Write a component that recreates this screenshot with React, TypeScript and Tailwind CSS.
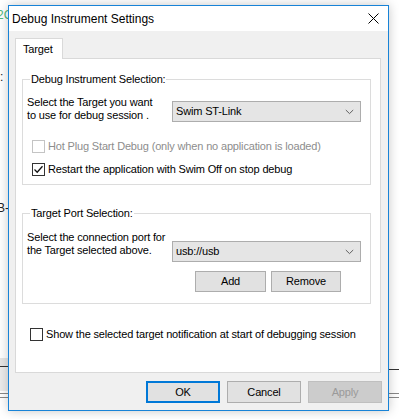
import React from "react";

const F = { fontFamily: '"Liberation Sans", Arial, sans-serif' };

function Check({ checked, disabled }: { checked?: boolean; disabled?: boolean }) {
  return (
    <div
      className={`w-[13px] h-[13px] border bg-white flex items-center justify-center shrink-0 ${
        disabled ? "border-[#c4c4c4]" : "border-[#333333]"
      }`}
    >
      {checked && (
        <svg width="11" height="11" viewBox="0 0 11 11">
          <path d="M1.5 5.5 L4.2 8.2 L9.5 2.2" fill="none" stroke="#111" strokeWidth="1.3" />
        </svg>
      )}
    </div>
  );
}

function Combo({ text }: { text: string }) {
  return (
    <div className="w-[189px] h-[21px] bg-[#e5e5e5] border border-[#adadad] flex items-center pl-[3px] pr-[6px] text-[11px] text-black">
      <span className="flex-1">{text}</span>
      <svg width="9" height="6" viewBox="0 0 9 6">
        <path d="M0.8 1 L4.5 4.6 L8.2 1" fill="none" stroke="#606060" strokeWidth="1" />
      </svg>
    </div>
  );
}

function Btn({ children, className = "" }: { children: React.ReactNode; className?: string }) {
  return (
    <div
      className={`h-[21px] flex items-center justify-center text-[11px] border ${className}`}
    >
      {children}
    </div>
  );
}

export default function App() {
  return (
    <div className="relative w-[399px] h-[419px] bg-white overflow-hidden" style={F}>
      {/* background desktop fragments */}
      <div className="absolute left-[-3px] top-[6px] text-[12px] text-[#4fb87a]">2C</div>
      <div className="absolute left-[0px] top-[68px] text-[12px] text-[#222]">:</div>
      <div className="absolute left-[-3px] top-[199px] text-[12px] text-[#222]">B-</div>
      <div className="absolute left-0 top-[358px] w-[10px] h-[8px] bg-[#e6e6e6]" />
      <div className="absolute left-0 top-[366px] w-[10px] h-[1px] bg-[#333]" />
      <div className="absolute left-0 top-[367px] w-[10px] h-[24px] bg-[#ececec]" />
      <div className="absolute left-0 top-[393px] w-[10px] h-[1px] bg-[#888]" />
      <div className="absolute left-0 top-[397px] w-[10px] h-[1px] bg-[#888]" />
      <div className="absolute left-[389px] top-[369px] w-[10px] h-[1px] bg-[#333]" />
      <div className="absolute left-[389px] top-[393px] w-[10px] h-[1px] bg-[#888]" />
      <div className="absolute left-[389px] top-[397px] w-[10px] h-[1px] bg-[#888]" />

      {/* dialog window */}
      <div className="absolute left-[8px] top-[5px] w-[381px] h-[406px] border border-[#1883d7] bg-[#f0f0f0] flex flex-col shadow-[0_0_10px_rgba(0,0,0,0.22)]">
        {/* title bar */}
        <div className="h-[25px] bg-white flex items-center pl-[3px] pr-[9px] shrink-0">
          <span className="flex-1 text-[12px] text-black">Debug Instrument Settings</span>
          <svg width="11" height="11" viewBox="0 0 11 11">
            <path d="M0.5 0.5 L10.5 10.5 M10.5 0.5 L0.5 10.5" stroke="#000" strokeWidth="1" />
          </svg>
        </div>

        {/* client */}
        <div className="flex-1 flex flex-col pt-[7px] pl-[6px] pr-[7px] tracking-[-0.16px]">
          {/* tab header */}
          <div className="flex">
            <div className="w-[48px] h-[21px] bg-white border border-b-0 border-[#d9d9d9] flex items-center pl-[7px] text-[11px] text-black -mb-[1px] relative z-10">
              Target
            </div>
          </div>
          {/* tab page */}
          <div className="h-[315px] bg-white border border-[#d9d9d9] flex flex-col pl-[6px]">
            {/* group 1 */}
            <div className="relative mt-[20px] w-[349px] h-[106px] border border-[#dcdcdc] text-[11px] text-black">
              <span className="absolute left-[7px] -top-[7px] leading-[13px] bg-white px-[1px]">
                Debug Instrument Selection:
              </span>
              <div className="flex pt-[16px] pl-[4px]">
                <div className="w-[145px] leading-[13px]">
                  <div>Select the Target you want</div>
                  <div>to use for debug session .</div>
                </div>
                <div className="mt-[5px]">
                  <Combo text="Swim ST-Link" />
                </div>
              </div>
              <div className="flex items-center mt-[18px] pl-[9px] gap-[3px] h-[13px]">
                <Check disabled />
                <span className="text-[#8d8d8d]">
                  Hot Plug Start Debug (only when no application is loaded)
                </span>
              </div>
              <div className="flex items-center mt-[10px] pl-[9px] gap-[3px] h-[13px]">
                <Check checked />
                <span>Restart the application with Swim Off on stop debug</span>
              </div>
            </div>

            {/* group 2 */}
            <div className="relative mt-[28px] w-[349px] h-[91px] border border-[#dcdcdc] text-[11px] text-black">
              <span className="absolute left-[7px] -top-[7px] leading-[13px] bg-white px-[1px]">
                Target Port Selection:
              </span>
              <div className="flex pt-[17px] pl-[4px]">
                <div className="w-[145px] leading-[13px]">
                  <div>Select the connection port for</div>
                  <div>the Target selected above.</div>
                </div>
                <div className="mt-[10px]">
                  <Combo text="usb://usb" />
                </div>
              </div>
              <div className="flex mt-[9px] pl-[172px] gap-[5px]">
                <Btn className="w-[71px] bg-[#e1e1e1] border-[#adadad]">Add</Btn>
                <Btn className="w-[70px] bg-[#e1e1e1] border-[#adadad]">Remove</Btn>
              </div>
            </div>

            {/* show notification */}
            <div className="flex items-center mt-[24px] pl-[8px] gap-[3px] h-[13px] text-[11px] text-black">
              <Check />
              <span>Show the selected target notification at start of debugging session</span>
            </div>
          </div>

          {/* buttons */}
          <div className="flex justify-end gap-[7px] mt-[8px] -mr-[1px]">
            <Btn className="w-[74px] h-[22px] bg-[#e1e1e1] border-2 border-[#0078d7] text-black">OK</Btn>
            <Btn className="w-[74px] h-[22px] bg-[#e1e1e1] border-[#adadad] text-black">Cancel</Btn>
            <Btn className="w-[74px] h-[22px] bg-[#cccccc] border-[#bfbfbf] text-[#9a9a9a]">Apply</Btn>
          </div>
        </div>
      </div>
    </div>
  );
}
